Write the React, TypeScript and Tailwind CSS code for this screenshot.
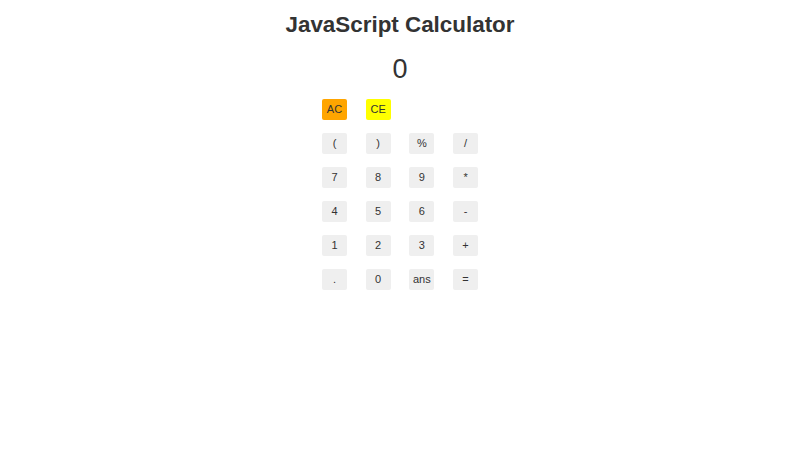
import React, { useState } from 'react';

type Key = { label: string; color?: string };

const rows: (Key | null)[][] = [
  [{ label: 'AC', color: 'bg-[#ffa500]' }, { label: 'CE', color: 'bg-[#ffff00]' }, null, null],
  [{ label: '(' }, { label: ')' }, { label: '%' }, { label: '/' }],
  [{ label: '7' }, { label: '8' }, { label: '9' }, { label: '*' }],
  [{ label: '4' }, { label: '5' }, { label: '6' }, { label: '-' }],
  [{ label: '1' }, { label: '2' }, { label: '3' }, { label: '+' }],
  [{ label: '.' }, { label: '0' }, { label: 'ans' }, { label: '=' }],
];

const App: React.FC = () => {
  const [display, setDisplay] = useState('0');
  const [ans, setAns] = useState('0');

  const press = (label: string) => {
    if (label === 'AC') return setDisplay('0');
    if (label === 'CE') return setDisplay(prev => (prev.length > 1 ? prev.slice(0, -1) : '0'));
    if (label === '=') {
      try {
        // eslint-disable-next-line no-new-func
        const result = String(Function(`return (${display.replace(/%/g, '/100')})`)());
        setAns(result);
        setDisplay(result);
      } catch {
        setDisplay('Error');
      }
      return;
    }
    const value = label === 'ans' ? ans : label;
    setDisplay(prev => (prev === '0' || prev === 'Error' ? value : prev + value));
  };

  return (
    <div className="min-h-screen bg-white flex flex-col items-center text-[#333] font-['Liberation_Sans',Arial,sans-serif]">
      <h1 className="mt-[12px] text-[22.4px] leading-[26px] font-bold">JavaScript Calculator</h1>
      <div className="mt-[16px] text-[27px] leading-[31px]">{display}</div>
      <div className="mt-[14px] grid grid-cols-[repeat(4,25px)] gap-x-[18.7px] gap-y-[13px]">
        {rows.flat().map((key, i) =>
          key ? (
            <button
              key={i}
              onClick={() => press(key.label)}
              className={`h-[21px] w-[25px] rounded-[2px] text-[11px] leading-none text-[#333] ${key.color ?? 'bg-[#efefef]'}`}
            >
              {key.label}
            </button>
          ) : (
            <span key={i} />
          )
        )}
      </div>
    </div>
  );
};

export default App;
